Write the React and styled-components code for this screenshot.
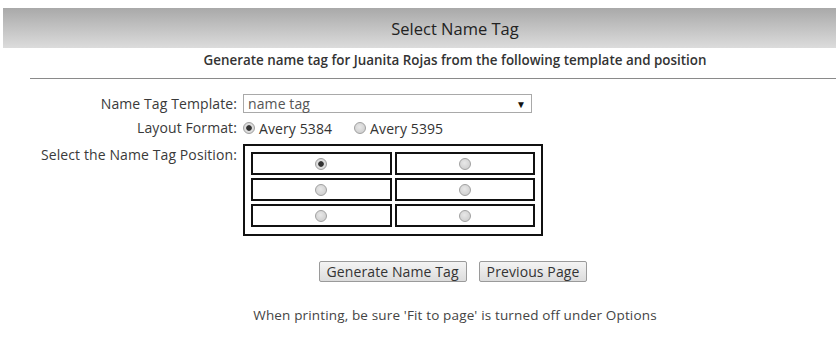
import React from "react";
import styled, { createGlobalStyle, css } from "styled-components";

const Global = createGlobalStyle`
  html, body { margin: 0; padding: 0; background: #fff; }
  body { font-family: "Open Sans", "Liberation Sans", sans-serif; color: #333; }
`;

const centred = css`
  padding-left: 71px;
  text-align: center;
`;

const Page = styled.div`
  padding: 8px 0 0 3px;
`;

const Header = styled.div`
  ${centred};
  height: 40px;
  display: flex;
  align-items: center;
  justify-content: center;
  background: linear-gradient(to bottom, #a9a9a9, #dcdcdc);
  font-size: 16.5px;
  color: #222;
`;

const Subtitle = styled.div`
  ${centred};
  font-size: 13.4px;
  font-weight: 600;
  color: #333;
  margin-top: 4px;
  line-height: 16px;
`;

const Rule = styled.hr`
  margin: 10px 0 0 27px;
  border: 0;
  border-top: 1px solid #8a8a8a;
  height: 0;
`;

const Form = styled.div`
  display: grid;
  grid-template-columns: 207px 1fr;
  column-gap: 6px;
  row-gap: 5px;
  margin: 15px 0 0 27px;
  font-size: 14px;
  letter-spacing: 0.1px;
  color: #3a3a3a;
`;

const Label = styled.div`
  text-align: right;
  line-height: 19px;
  padding-top: ${(p) => p.$pt || "0"};
`;

const SelectBox = styled.div`
  width: 278px;
  height: 17px;
  border: 1px solid #a9a9a9;
  display: flex;
  align-items: center;
  justify-content: space-between;
  padding: 0 5px 0 4px;
  box-sizing: content-box;
  color: #555;
`;

const Arrow = styled.span`
  font-size: 10px;
  line-height: 10px;
  color: #111;
`;

const RadioRow = styled.div`
  display: flex;
  align-items: center;
  height: 20px;
  gap: 22px;
`;

const RadioItem = styled.label`
  display: flex;
  align-items: center;
  gap: 4px;
  color: #333;
`;

const Radio = styled.span`
  width: 12px;
  height: 12px;
  border-radius: 50%;
  border: 1px solid #a0a0a0;
  box-sizing: border-box;
  display: inline-block;
  flex: none;
  background: ${(p) =>
    p.$checked
      ? "radial-gradient(circle, #333 0 2.4px, #e0e0e0 3.2px, #cfcfcf 100%)"
      : "radial-gradient(circle at 45% 40%, #e8e8e8, #c8c8c8)"};
`;

const PosTable = styled.div`
  width: 300px;
  box-sizing: border-box;
  border: 2px solid #111;
  padding: 6px 6px 7px 6px;
  margin-top: 1px;
  display: grid;
  grid-template-columns: 1fr 1fr;
  gap: 3px;
`;

const Cell = styled.div`
  height: 23px;
  box-sizing: border-box;
  border: 2px solid #111;
  display: flex;
  align-items: center;
  justify-content: center;
`;

const Buttons = styled.div`
  ${centred};
  display: flex;
  justify-content: center;
  gap: 12px;
  margin-top: 25px;
  padding-right: 4px;
`;

const Button = styled.button`
  font-family: "Open Sans", "Liberation Sans", sans-serif;
  font-size: 14px;
  letter-spacing: 0.1px;
  color: #333;
  height: 21px;
  padding: 0 7px;
  border: 1px solid #9a9a9a;
  border-radius: 2px;
  background: linear-gradient(to bottom, #f4f4f4, #dcdcdc);
  line-height: 19px;
`;

const Note = styled.div`
  ${centred};
  font-size: 13.5px;
  letter-spacing: 0.15px;
  color: #444;
  margin-top: 24px;
`;

export default function App() {
  const positions = [0, 1, 2, 3, 4, 5];
  return (
    <Page>
      <Global />
      <Header>Select Name Tag</Header>
      <Subtitle>Generate name tag for Juanita Rojas from the following template and position</Subtitle>
      <Rule />
      <Form>
        <Label>Name Tag Template:</Label>
        <SelectBox>
          <span>name tag</span>
          <Arrow>▼</Arrow>
        </SelectBox>
        <Label>Layout Format:</Label>
        <RadioRow>
          <RadioItem>
            <Radio $checked />
            Avery 5384
          </RadioItem>
          <RadioItem>
            <Radio />
            Avery 5395
          </RadioItem>
        </RadioRow>
        <Label $pt="2px">Select the Name Tag Position:</Label>
        <PosTable>
          {positions.map((i) => (
            <Cell key={i}>
              <Radio $checked={i === 0} />
            </Cell>
          ))}
        </PosTable>
      </Form>
      <Buttons>
        <Button>Generate Name Tag</Button>
        <Button>Previous Page</Button>
      </Buttons>
      <Note>When printing, be sure 'Fit to page' is turned off under Options</Note>
    </Page>
  );
}
